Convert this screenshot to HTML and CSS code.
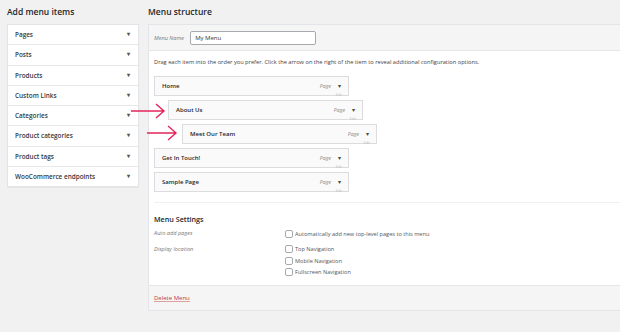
FILE: index.html
```html
<!DOCTYPE html>
<html>
<head>
<meta charset="utf-8">
<link rel="stylesheet" href="styles.css">
</head>
<body>
<div class="page">
  <div class="left">
    <h2 class="heading">Add menu items</h2>
    <ul class="accordion">
      <li>Pages<span class="caret">▾</span></li>
      <li>Posts<span class="caret">▾</span></li>
      <li>Products<span class="caret">▾</span></li>
      <li>Custom Links<span class="caret">▾</span></li>
      <li>Categories<span class="caret">▾</span></li>
      <li>Product categories<span class="caret">▾</span></li>
      <li>Product tags<span class="caret">▾</span></li>
      <li>WooCommerce endpoints<span class="caret">▾</span></li>
    </ul>
  </div>
  <div class="right">
    <h2 class="heading">Menu structure</h2>
    <div class="box">
      <div class="box-head">
        <span class="label">Menu Name</span>
        <div class="input">My Menu</div>
      </div>
      <div class="box-body">
        <p class="drag">Drag each item into the order you prefer. Click the arrow on the right of the item to reveal additional configuration options.</p>
        <div class="items">
          <div class="item d0"><span class="title">Home</span><span class="type">Page</span><span class="caret">▾</span><span class="sub">Edit</span></div>
          <div class="item d1"><span class="title">About Us</span><span class="type">Page</span><span class="caret">▾</span><span class="sub">Edit</span></div>
          <div class="item d2"><span class="title">Meet Our Team</span><span class="type">Page</span><span class="caret">▾</span><span class="sub">Edit</span></div>
          <div class="item d0"><span class="title">Get In Touch!</span><span class="type">Page</span><span class="caret">▾</span><span class="sub">Edit</span></div>
          <div class="item d0"><span class="title">Sample Page</span><span class="type">Page</span><span class="caret">▾</span><span class="sub">Edit</span></div>
        </div>
        <div class="settings">
          <h3 class="settings-title">Menu Settings</h3>
          <div class="setting-row">
            <span class="label">Auto add pages</span>
            <div class="checks">
              <label class="check"><span class="cb"></span>Automatically add new top-level pages to this menu</label>
            </div>
          </div>
          <div class="setting-row">
            <span class="label">Display location</span>
            <div class="checks">
              <label class="check"><span class="cb"></span>Top Navigation</label>
              <label class="check"><span class="cb"></span>Mobile Navigation</label>
              <label class="check"><span class="cb"></span>Fullscreen Navigation</label>
            </div>
          </div>
        </div>
      </div>
      <div class="box-foot">
        <span class="delete">Delete Menu</span>
      </div>
    </div>
  </div>
</div>
<svg class="arrow a1" width="36" height="18" viewBox="0 0 36 18"><path d="M0 9 H33 M25 2 L33 9 L25 16" fill="none" stroke="#e3245b" stroke-width="1.4"/></svg>
<svg class="arrow a2" width="32" height="18" viewBox="0 0 32 18"><path d="M0 9 H29 M21 2 L29 9 L21 16" fill="none" stroke="#e3245b" stroke-width="1.4"/></svg>
</body>
</html>
```
FILE: styles.css
```css
html, body {
  margin: 0;
  padding: 0;
}
body {
  background: #f1f1f1;
  font-family: "Open Sans", "Noto Sans", sans-serif;
  color: #23282d;
  width: 620px;
  height: 332px;
  overflow: hidden;
  position: relative;
}
.page {
  display: flex;
  gap: 9px;
  padding-left: 7px;
}
.left {
  width: 132px;
  flex: none;
}
.right {
  flex: 1;
}
.heading {
  margin: 0;
  height: 24px;
  line-height: 24px;
  font-size: 8.5px;
  font-weight: 600;
  color: #23282d;
}
.accordion {
  list-style: none;
  margin: 0;
  padding: 0;
  background: #fff;
  border: 1px solid #e2e4e7;
  box-shadow: 0 1px 1px rgba(0,0,0,0.04);
}
.accordion li {
  height: 19.3px;
  line-height: 19.3px;
  border-top: 1px solid #e8e8e8;
  padding: 0 8px 0 7px;
  font-size: 6.4px;
  font-weight: 600;
  color: #32373c;
  display: flex;
  justify-content: space-between;
}
.accordion li:first-child {
  border-top: 0;
}
.caret {
  font-size: 6px;
  color: #555;
}
.box {
  background: #fff;
  border: 1px solid #e2e4e7;
  border-right: 0;
}
.box-head {
  height: 25px;
  background: #f5f5f5;
  border-bottom: 1px solid #e5e5e5;
  display: flex;
  align-items: center;
  padding-left: 5px;
  gap: 6px;
}
.label {
  font-size: 5.6px;
  font-style: italic;
  color: #7a7a7a;
}
.input {
  width: 120px;
  height: 12px;
  line-height: 12px;
  border: 1px solid #a7aaad;
  border-radius: 2px;
  background: #fff;
  font-size: 6px;
  color: #32373c;
  padding-left: 4px;
  margin-top: 1px;
}
.box-body {
  padding: 0 0 0 5px;
}
.drag {
  margin: 0;
  padding-top: 5px;
  height: 20px;
  font-size: 5.7px;
  line-height: 12px;
  color: #444;
}
.items {
  display: flex;
  flex-direction: column;
  gap: 4px;
}
.item {
  width: 193px;
  height: 18px;
  background: #fafafa;
  border: 1px solid #dcdcde;
  display: flex;
  align-items: center;
  position: relative;
  box-sizing: content-box;
}
.item.d1 { margin-left: 14px; }
.item.d2 { margin-left: 28px; }
.title {
  flex: 1;
  padding-left: 7px;
  font-size: 6px;
  font-weight: 600;
  color: #23282d;
}
.type {
  font-size: 5.2px;
  color: #888;
  font-style: italic;
  margin-right: 7px;
}
.item .caret {
  margin-right: 7px;
  font-size: 5.5px;
  color: #444;
}
.sub {
  position: absolute;
  right: 6px;
  bottom: -2px;
  font-size: 3.5px;
  color: #bbb;
  line-height: 4px;
}
.settings {
  margin-top: 10px;
  border-top: 1px solid #f0f0f0;
  padding-top: 8px;
  padding-bottom: 3px;
}
.settings-title {
  margin: 0;
  font-size: 7.2px;
  font-weight: 600;
  color: #23282d;
  line-height: 16px;
}
.setting-row {
  display: grid;
  grid-template-columns: 131px 1fr;
  margin-top: 1px;
  margin-bottom: 4px;
}
.setting-row .label {
  line-height: 11.5px;
}
.checks {
  display: flex;
  flex-direction: column;
}
.check {
  display: flex;
  align-items: center;
  gap: 2px;
  height: 11.5px;
  font-size: 5.6px;
  color: #50575e;
}
.cb {
  width: 6px;
  height: 6px;
  border: 1px solid #a7aaad;
  border-radius: 2px;
  background: #fff;
}
.box-foot {
  height: 24px;
  background: #f5f5f5;
  border-top: 1px solid #e5e5e5;
  display: flex;
  align-items: center;
  padding-left: 5px;
}
.delete {
  font-size: 6px;
  color: #c0393b;
  text-decoration: underline;
  text-decoration-color: #e0a0a0;
}
.arrow {
  position: absolute;
}
.a1 {
  left: 131px;
  top: 102px;
}
.a2 {
  left: 147px;
  top: 124px;
}
```
